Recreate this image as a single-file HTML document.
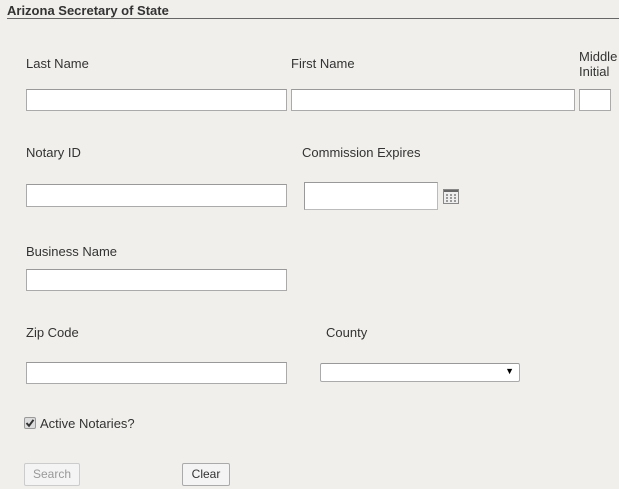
<!DOCTYPE html>
<html><head><style>
body{margin:0;width:619px;height:489px;background:#f0efeb;font-family:"Liberation Sans",Arial,sans-serif;color:#333;position:relative;overflow:hidden}
.a{position:absolute}
.t{font-size:13px;font-weight:bold;left:7px;top:3px;color:#333}
.l{font-size:13px;line-height:15px}
.i{position:absolute;background:#fff;border:1px solid #aaa;border-top-color:#999;box-sizing:border-box}
.b{position:absolute;box-sizing:border-box;border:1px solid #bbb;background:#f4f4f4;font-size:12px;text-align:center;line-height:21px;border-radius:2px}
</style></head><body>
<div class="a t">Arizona Secretary of State</div>
<div class="a" style="left:7px;top:18px;width:612px;height:1px;background:#666"></div>

<div class="a l" style="left:26px;top:56px">Last Name</div>
<div class="a l" style="left:291px;top:56px">First Name</div>
<div class="a l" style="left:579px;top:49px">Middle<br>Initial</div>
<div class="i" style="left:26px;top:89px;width:261px;height:22px"></div>
<div class="i" style="left:291px;top:89px;width:284px;height:22px"></div>
<div class="i" style="left:579px;top:89px;width:32px;height:22px"></div>

<div class="a l" style="left:26px;top:145px">Notary ID</div>
<div class="a l" style="left:302px;top:145px">Commission Expires</div>
<div class="i" style="left:26px;top:184px;width:261px;height:23px"></div>
<div class="i" style="left:304px;top:182px;width:134px;height:28px;border-color:#999 #bbb #bbb #999"></div>
<svg class="a" style="left:443px;top:189px" width="16" height="15" viewBox="0 0 16 15">
<rect x="0.5" y="0.5" width="15" height="14" fill="#eee" stroke="#888"/>
<rect x="1" y="1" width="14" height="2" fill="#666"/>
<g fill="#999"><rect x="3" y="5" width="2" height="2"/><rect x="7" y="5" width="2" height="2"/><rect x="11" y="5" width="2" height="2"/><rect x="3" y="8" width="2" height="2"/><rect x="7" y="8" width="2" height="2"/><rect x="11" y="8" width="2" height="2"/><rect x="3" y="11" width="2" height="2"/><rect x="7" y="11" width="2" height="2"/><rect x="11" y="11" width="2" height="2"/></g>
</svg>

<div class="a l" style="left:26px;top:244px">Business Name</div>
<div class="i" style="left:26px;top:269px;width:261px;height:22px"></div>

<div class="a l" style="left:26px;top:325px">Zip Code</div>
<div class="a l" style="left:326px;top:325px">County</div>
<div class="i" style="left:26px;top:362px;width:261px;height:22px"></div>
<div class="i" style="left:320px;top:363px;width:200px;height:19px;border-radius:2px"><span class="a" style="right:5px;top:2px;font-size:9px;color:#000">▼</span></div>

<svg class="a" style="left:24px;top:417px" width="12" height="12" viewBox="0 0 12 12">
<rect x="0.5" y="0.5" width="11" height="11" rx="1.5" fill="#ddd" stroke="#999"/>
<path d="M2.5 6 L5 8.8 L9.5 2.8" fill="none" stroke="#333" stroke-width="2"/>
</svg>
<div class="a l" style="left:40px;top:416px">Active Notaries?</div>

<div class="b" style="left:24px;top:463px;width:56px;height:23px;color:#999;border-color:#ccc">Search</div>
<div class="b" style="left:182px;top:463px;width:48px;height:23px;color:#333;border-color:#aaa">Clear</div>
</body></html>
